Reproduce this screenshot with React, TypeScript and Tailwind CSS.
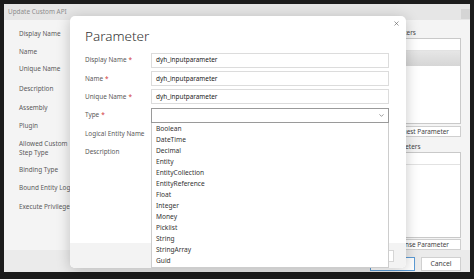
import { X, ChevronDown } from 'lucide-react';

const FONT = { fontFamily: '"Noto Sans", "Open Sans", Arial, sans-serif' };

const TYPES = [
  'Boolean',
  'DateTime',
  'Decimal',
  'Entity',
  'EntityCollection',
  'EntityReference',
  'Float',
  'Integer',
  'Money',
  'Picklist',
  'String',
  'StringArray',
  'Guid',
];

const Req = () => <span className="ml-[2px] text-[#d13438]">*</span>;

const ParamBox = ({
  label,
  button,
  selected,
  boxH,
}: {
  label: string;
  button: string;
  selected?: boolean;
  boxH: string;
}) => (
  <div className="flex flex-col">
    <div className="h-[10px] leading-[10px]">{label}</div>
    <div className={`flex flex-col border border-[#c9c9c9] bg-white ${boxH}`}>
      <div className="h-[12px] border-b border-[#e2e2e2]" />
      {selected && <div className="h-[15px] bg-gradient-to-b from-[#e6e6e6] to-[#d6d6d6]" />}
    </div>
    <button className="mt-[1.5px] h-[11px] border border-[#cfcfcf] bg-white pr-[11px] text-right leading-[9px]">
      {button}
    </button>
  </div>
);

const Field = ({ label, req, children }: { label: string; req?: boolean; children?: React.ReactNode }) => (
  <div className="flex h-[18.3px] items-center">
    <div className="w-[66px] shrink-0">
      {label}
      {req && <Req />}
    </div>
    {children}
  </div>
);

const Input = ({ value }: { value: string }) => (
  <div className="flex h-[15px] w-[238px] items-center border border-[#dcdcdc] bg-white pl-[4px] text-[#222]">{value}</div>
);

export default function App() {
  return (
    <div className="relative h-[279px] w-[474px] overflow-hidden bg-[#1c1c1c] pb-[7px] pl-[4px] pr-[4px] pt-[4px]" style={FONT}>
      <div className="flex h-full flex-col bg-[#f4f4f4] text-[6.4px] text-[#5a5a5a]">
        {/* title bar */}
        <div className="flex h-[16px] shrink-0 items-center justify-between bg-[#e6e6e6] pl-[4px]">
          <span className="text-[6.4px] text-[#8d8d8d]">Update Custom API</span>
          <div className="mt-[4px] h-[10px] w-[9px] bg-[#d5d5d5]" />
        </div>

        {/* body */}
        <div className="flex h-[230px] shrink-0">
          <div className="flex flex-col pl-[15px] pt-[9px] leading-[10px]">
            <div>Display Name</div>
            <div className="mt-[8px]">Name</div>
            <div className="mt-[7px]">Unique Name</div>
            <div className="mt-[10px]">Description</div>
            <div className="mt-[9px]">Assembly</div>
            <div className="mt-[8px]">Plugin</div>
            <div className="mt-[8px] leading-[9px]">
              Allowed Custom
              <br />
              Step Type
            </div>
            <div className="mt-[8px]">Binding Type</div>
            <div className="mt-[8px]">Bound Entity Logical Name</div>
            <div className="mt-[9px]">Execute Privilege Name</div>
          </div>

          <div className="ml-auto mr-[9px] flex w-[106px] flex-col pt-[8px] text-[#444]">
            <ParamBox label="Request Parameters" button="Add Request Parameter" selected boxH="h-[86px]" />
            <div className="mt-[5px]">
              <ParamBox label="Response Parameters" button="Add Response Parameter" boxH="h-[86px]" />
            </div>
          </div>
        </div>

        {/* footer */}
        <div className="flex flex-1 justify-end gap-[6px] bg-[#ebebeb] pr-[9px] pt-[7px]">
          <button aria-label="Save" className="h-[14px] w-[45px] border border-[#5b9bd5] bg-white" />
          <button className="h-[14px] w-[40px] border border-[#d0d0d0] bg-white text-[6.8px] text-[#444]">Cancel</button>
        </div>
      </div>

      {/* parameter modal */}
      <div className="absolute left-[70px] top-[16px] flex h-[252px] w-[336px] flex-col rounded-[5px] bg-white text-[6.4px] text-[#5a5a5a] shadow-[0_2px_14px_rgba(0,0,0,0.22)]">
        <div className="relative h-[35px] pl-[15px] pt-[10px]">
          <div className="text-[13.5px] font-light leading-[20px] text-[#333]">Parameter</div>
          <X className="absolute right-[6px] top-[4px] h-[7px] w-[7px] text-[#555]" strokeWidth={2} />
        </div>
        <div className="flex flex-1 flex-col pl-[15px]">
          <Field label="Display Name" req>
            <Input value="dyh_inputparameter" />
          </Field>
          <Field label="Name" req>
            <Input value="dyh_inputparameter" />
          </Field>
          <Field label="Unique Name" req>
            <Input value="dyh_inputparameter" />
          </Field>
          <Field label="Type" req>
            <div className="flex h-[15px] w-[238px] items-center justify-end border border-[#9a9a9a] bg-white pr-[3px]">
              <ChevronDown className="h-[7px] w-[7px] text-[#555]" strokeWidth={2} />
            </div>
          </Field>
          <Field label="Logical Entity Name" />
          <Field label="Description" />
        </div>
        <div className="flex h-[25px] justify-end rounded-b-[5px] bg-[#f3f3f3] pr-[12px] pt-[7px]">
          <button aria-label="Cancel" className="h-[12px] w-[40px] border border-[#d6d6d6] bg-white" />
        </div>

        {/* type dropdown */}
        <div className="absolute left-[81px] top-[107px] flex h-[145px] w-[238px] flex-col border-x border-b border-[#cdcdcd] bg-white pt-[0.5px] text-[6.6px] text-[#333]">
          {TYPES.map((t) => (
            <div key={t} className="flex h-[11.15px] items-center pl-[4px]">
              {t}
            </div>
          ))}
        </div>
      </div>
    </div>
  );
}
